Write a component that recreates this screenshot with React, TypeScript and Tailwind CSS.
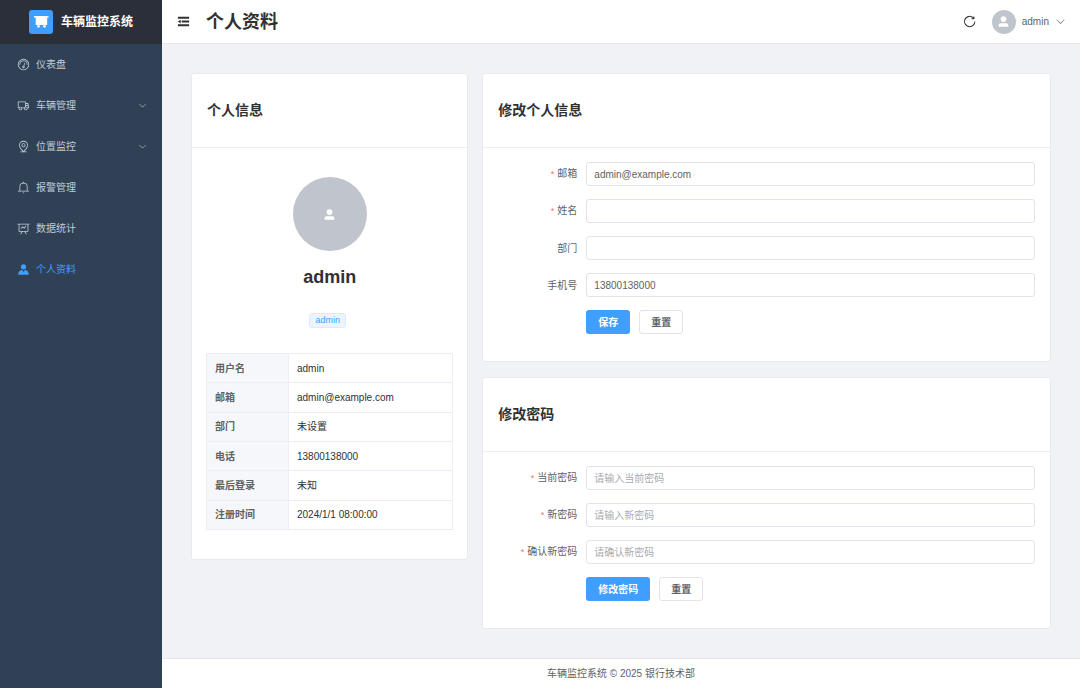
import { useState } from "react"

const icons = {
  odometer:
    "M512 896a384 384 0 1 0 0-768 384 384 0 0 0 0 768m0 64a448 448 0 1 1 0-896 448 448 0 0 1 0 896M192 512a320 320 0 1 1 640 0 32 32 0 1 1-64 0 256 256 0 1 0-512 0 32 32 0 0 1-64 0M570.432 627.84A96 96 0 1 1 509.568 608l60.992-187.776A32 32 0 1 1 631.424 440l-60.992 187.776zM502.08 734.464a32 32 0 1 0 19.84-60.928 32 32 0 0 0-19.84 60.928",
  van: "M128.896 736H96a32 32 0 0 1-32-32V224a32 32 0 0 1 32-32h576a32 32 0 0 1 32 32v96h164.544a32 32 0 0 1 31.616 27.136l54.144 352A32 32 0 0 1 922.688 736h-91.52a144 144 0 1 1-286.272 0H415.104a144 144 0 1 1-286.272 0zm23.36-64a143.872 143.872 0 0 1 239.488 0H568.32c17.088-25.6 42.24-45.376 71.744-55.808V256H128v416zm655.488 0h77.632l-19.648-128H704v64.896A144 144 0 0 1 807.744 672m48.128-192-14.72-96H704v96zM688 832a80 80 0 1 0 0-160 80 80 0 0 0 0 160m-416 0a80 80 0 1 0 0-160 80 80 0 0 0 0 160",
  location:
    "M288 896h448q32 0 32 32t-32 32H288q-32 0-32-32t32-32M800 416a288 288 0 1 0-576 0c0 118.144 94.528 272.128 288 456.576C705.472 688.128 800 534.144 800 416M512 960C277.312 746.688 160 565.312 160 416a352 352 0 0 1 704 0c0 149.312-117.312 330.688-352 544M512 512a96 96 0 1 0 0-192 96 96 0 0 0 0 192m0 64a160 160 0 1 1 0-320 160 160 0 0 1 0 320",
  bell: "M512 64a64 64 0 0 1 64 64v64H448v-64a64 64 0 0 1 64-64M256 768h512V448a256 256 0 1 0-512 0zm256-640a320 320 0 0 1 320 320v384H192V448a320 320 0 0 1 320-320M96 768h832q32 0 32 32t-32 32H96q-32 0-32-32t32-32m352 128h128a64 64 0 0 1-128 0",
  dataLine:
    "M359.168 768H160a32 32 0 0 1-32-32V192H64a32 32 0 0 1 0-64h896a32 32 0 1 1 0 64h-64v544a32 32 0 0 1-32 32H665.216l110.848 192h-73.856L591.36 768H433.024L322.176 960H248.32zM832 192H192v512h640zM342.656 534.656a32 32 0 1 1-45.312-45.312L444.992 341.76l125.44 94.08L679.04 300.032a32 32 0 1 1 49.92 39.936L581.632 524.224 451.008 426.24 342.656 534.592z",
  avatar:
    "M628.736 528.896A416 416 0 0 1 928 928H96a415.872 415.872 0 0 1 299.264-399.104L512 704zM720 304a208 208 0 1 1-416 0 208 208 0 0 1 416 0",
  userFilled:
    "M288 320a224 224 0 1 0 448 0 224 224 0 1 0-448 0m544 608H160a32 32 0 0 1-32-32v-96a160 160 0 0 1 160-160h448a160 160 0 0 1 160 160v96a32 32 0 0 1-32 32z",
  refresh:
    "M784.512 230.272v-50.56a32 32 0 1 1 64 0v149.056a32 32 0 0 1-32 32H667.52a32 32 0 1 1 0-64h92.992A320 320 0 1 0 524.8 833.152a320 320 0 0 0 320-320h64a384 384 0 0 1-384 384 384 384 0 0 1-384-384 384 384 0 0 1 643.712-282.88",
  arrowDown:
    "M831.872 340.864 512 652.672 192.128 340.864a30.592 30.592 0 0 0-42.752 0 29.12 29.12 0 0 0 0 41.6L489.664 714.24a32 32 0 0 0 44.672 0l340.288-331.712a29.12 29.12 0 0 0 0-41.728 30.592 30.592 0 0 0-42.752 0z",
  fold: "M896 192H128v128h768zm0 256H384v128h512zm0 256H128v128h768zM320 384 128 512l192 128z",
}

type IconName = keyof typeof icons

function Icon({ name, className }: { name: IconName; className: string }) {
  return (
    <svg viewBox="0 0 1024 1024" className={className} fill="currentColor" aria-hidden="true">
      <path d={icons[name]} />
    </svg>
  )
}

const menu: { icon: IconName; label: string; sub?: boolean; active?: boolean }[] = [
  { icon: "odometer", label: "仪表盘" },
  { icon: "van", label: "车辆管理", sub: true },
  { icon: "location", label: "位置监控", sub: true },
  { icon: "bell", label: "报警管理" },
  { icon: "dataLine", label: "数据统计" },
  { icon: "avatar", label: "个人资料", active: true },
]

const profile = [
  ["用户名", "admin"],
  ["邮箱", "admin@example.com"],
  ["部门", "未设置"],
  ["电话", "13800138000"],
  ["最后登录", "未知"],
  ["注册时间", "2024/1/1 08:00:00"],
]

interface Field {
  id: string
  label: string
  required?: boolean
  type?: string
  value?: string
  placeholder?: string
}

const infoFields: Field[] = [
  { id: "email", label: "邮箱", required: true, value: "admin@example.com" },
  { id: "name", label: "姓名", required: true },
  { id: "department", label: "部门" },
  { id: "phone", label: "手机号", value: "13800138000" },
]

const passwordFields: Field[] = [
  { id: "current", label: "当前密码", required: true, type: "password", placeholder: "请输入当前密码" },
  { id: "new", label: "新密码", required: true, type: "password", placeholder: "请输入新密码" },
  { id: "confirm", label: "确认新密码", required: true, type: "password", placeholder: "请确认新密码" },
]

function Card({ title, children }: { title: string; children: React.ReactNode }) {
  return (
    <section className="rounded-[3px] border border-[#e8eaef] bg-white">
      <div className="flex h-[74px] items-center border-b border-[#ebedf1] px-[15px]">
        <h3 className="text-[14px] font-bold text-[#303133]">{title}</h3>
      </div>
      {children}
    </section>
  )
}

function Form({ fields, submit }: { fields: Field[]; submit: string }) {
  return (
    <form className="px-[15px] pt-[14px] pb-[27px]" onSubmit={(e) => e.preventDefault()}>
      <div className="flex flex-col gap-[13px]">
        {fields.map((f) => (
          <div key={f.id} className="flex items-center">
            <label htmlFor={f.id} className="w-[88px] shrink-0 pr-[9px] text-right text-[#606266]">
              {f.required && <span className="mr-[3px] text-[9px] text-[#f56c6c]">*</span>}
              {f.label}
            </label>
            <input
              id={f.id}
              type={f.type ?? "text"}
              defaultValue={f.value}
              placeholder={f.placeholder}
              className="h-6 min-w-0 flex-1 rounded-[3px] border border-[#e0e3e9] bg-white px-[7px] text-[#606266] outline-none placeholder:text-[#a8abb2] focus:border-[#409eff]"
            />
          </div>
        ))}
        <div className="flex gap-[9px] pl-[88px]">
          <button type="submit" className="h-6 rounded-[3px] bg-[#409eff] px-3 font-bold text-white">
            {submit}
          </button>
          <button type="reset" className="h-6 rounded-[3px] border border-[#e0e3e9] bg-white px-[11px] font-bold text-[#606266]">
            重置
          </button>
        </div>
      </div>
    </form>
  )
}

export default function App() {
  const [collapsed, setCollapsed] = useState(false)

  return (
    <div className="flex min-h-screen bg-white font-['Liberation_Sans','Noto_Sans_CJK_SC',sans-serif] text-[10px] leading-[15px] text-[#303133]">
      {!collapsed && (
        <aside className="w-[162px] shrink-0 bg-[#304156]">
          <div className="flex h-11 items-center justify-center gap-2 bg-[#2b2f3a]">
            <svg viewBox="0 0 24 24" className="size-6" aria-hidden="true">
              <rect width="24" height="24" rx="3" fill="#409eff" />
              <path d="M5 6h14.500v1.500h-1.300V15H6.700V7.500H5z" fill="#fff" />
              <circle cx="9.500" cy="16.300" r="1.400" fill="#fff" />
              <circle cx="15.500" cy="16.300" r="1.400" fill="#fff" />
            </svg>
            <h1 className="text-[12px] font-bold text-white">车辆监控系统</h1>
          </div>
          <nav>
            {menu.map((m) => (
              <a
                key={m.label}
                href="#"
                className={`flex h-[41px] items-center pr-[15px] pl-[17px] ${m.active ? "text-[#409eff]" : "text-[#bfcbd9]"}`}
              >
                <Icon name={m.icon} className="mr-[6px] size-[13px]" />
                <span className="flex-1">{m.label}</span>
                {m.sub && <Icon name="arrowDown" className="size-[9px]" />}
              </a>
            ))}
          </nav>
        </aside>
      )}

      <div className="flex min-w-0 flex-1 flex-col">
        <header className="flex h-11 items-center border-b border-[#e8e8e8] bg-white px-[14px]">
          <button type="button" aria-label="折叠菜单" onClick={() => setCollapsed(!collapsed)}>
            <Icon name="fold" className="size-[15px]" />
          </button>
          <h2 className="ml-[15px] flex-1 pt-[2px] text-[18px] font-bold">个人资料</h2>
          <button type="button" aria-label="刷新" className="mr-[15px]">
            <Icon name="refresh" className="size-[15px]" />
          </button>
          <button type="button" className="flex items-center text-[#606266]">
            <span className="mr-[6px] flex size-6 items-center justify-center rounded-full bg-[#c0c4cc] text-white">
              <Icon name="userFilled" className="size-[13px]" />
            </span>
            admin
            <Icon name="arrowDown" className="ml-[6px] size-[11px]" />
          </button>
        </header>

        <main className="grid flex-1 grid-cols-3 items-start gap-[14px] bg-[#f0f2f5] p-[29px]">
          <Card title="个人信息">
            <div className="flex flex-col items-center px-[14px] pt-[29px] pb-[29px]">
              <div className="flex size-[74px] items-center justify-center rounded-full bg-[#c0c4cc] text-white">
                <Icon name="userFilled" className="size-[13px]" />
              </div>
              <h2 className="mt-[14px] text-[18px] leading-[24px] font-bold">admin</h2>
              <span className="mt-[24px] mr-1 rounded-[3px] border border-[#d9ecff] bg-[#ecf5ff] px-[5px] text-[9px] leading-[13px] text-[#409eff]">
                admin
              </span>
              <table className="mt-[25px] h-[177px] w-full border-collapse">
                <tbody>
                  {profile.map(([label, value]) => (
                    <tr key={label}>
                      <th className="w-[82px] border border-[#ebeef5] bg-[#f5f7fa] px-2 text-left font-bold text-[#606266]">
                        {label}
                      </th>
                      <td className="border border-[#ebeef5] px-2">{value}</td>
                    </tr>
                  ))}
                </tbody>
              </table>
            </div>
          </Card>

          <div className="col-span-2 flex flex-col gap-[15px]">
            <Card title="修改个人信息">
              <Form fields={infoFields} submit="保存" />
            </Card>
            <Card title="修改密码">
              <Form fields={passwordFields} submit="修改密码" />
            </Card>
          </div>
        </main>

        <footer className="flex h-[30px] items-center justify-center border-t border-[#e8e8e8] bg-white text-[#606266]">
          车辆监控系统 © 2025 银行技术部
        </footer>
      </div>
    </div>
  )
}
